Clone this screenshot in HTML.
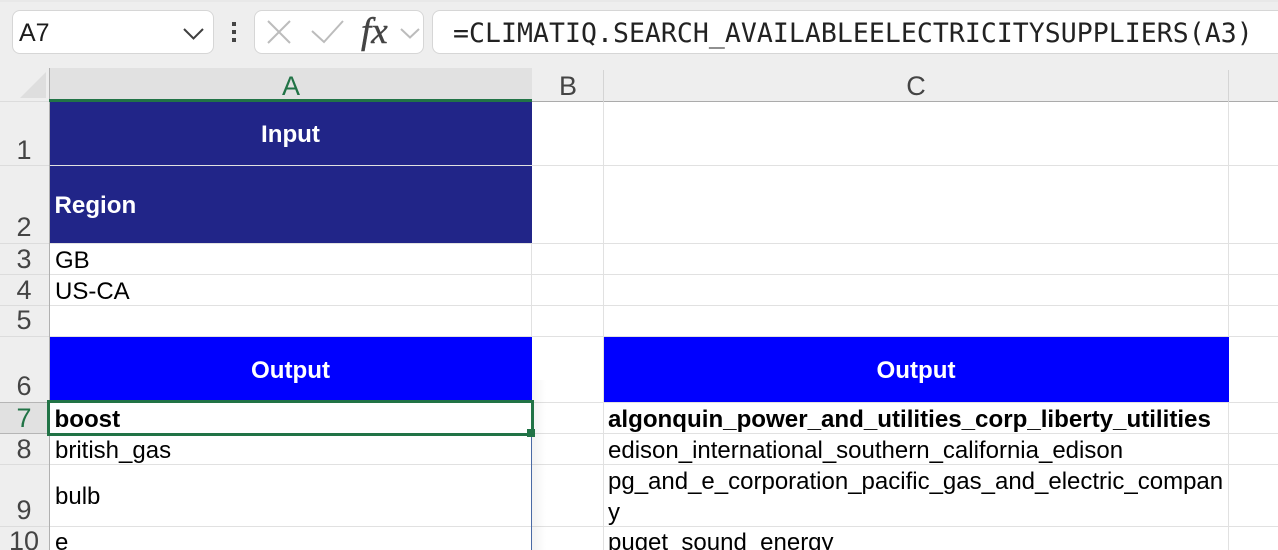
<!DOCTYPE html>
<html><head><meta charset="utf-8"><style>
html,body{margin:0;padding:0;background:#fff}
#p{position:relative;width:1278px;height:550px;overflow:hidden;background:#fff;font-family:"Liberation Sans",Arial,sans-serif}
#p div{position:absolute}
.h{background:#e1e1e1;height:1px}
.v{background:#e1e1e1;width:1px}
.t{font-size:24px;line-height:30px;color:#000;white-space:nowrap}
.b{font-weight:bold;font-size:24.120px}
.w{color:#fff;font-weight:bold;text-align:center;font-size:24.120px}
.rn{left:0;width:48px;text-align:center;font-size:27px;line-height:30px;color:#444}
.cn{font-size:27px;line-height:30px;color:#444;text-align:center;top:71px}
.box{background:#fff;border:1px solid #d6d6d6;border-radius:8px;box-sizing:border-box}
</style></head><body><div id="p">
<div style="left:0;top:0;width:1278px;height:102px;background:#eeeeee"></div>
<div style="left:0;top:0;width:1278px;height:2px;background:#e8e8e8"></div>
<div class="box" style="left:12px;top:10px;width:202px;height:44px"></div>
<div class="t" style="left:19px;top:18px;font-size:25px;color:#1c1c1c">A7</div>
<div class="box" style="left:254px;top:10px;width:170px;height:44px"></div>
<svg style="position:absolute;left:0;top:0" width="440" height="102">
<path d="M184 29l9.500 9.500 9.500-9.500" fill="none" stroke="#3f3f3f" stroke-width="2"/>
<rect x="232" y="22" width="4" height="4" fill="#444"/><rect x="232" y="30" width="4" height="4" fill="#444"/><rect x="232" y="38" width="4" height="4" fill="#444"/>
<path d="M268 21l22 22M290 21l-22 22" stroke="#bcbcbc" stroke-width="2" fill="none"/>
<path d="M312 31l12 11 19-21" stroke="#bcbcbc" stroke-width="2" fill="none"/>
<path d="M401 29l9 8.500 9-8.500" stroke="#bcbcbc" stroke-width="2" fill="none"/>
<path d="M20 98h26V72z" fill="#dedede"/>
</svg>
<div style="left:361px;top:12px;font-family:'Liberation Serif',serif;font-style:italic;font-size:37px;line-height:40px;color:#444;-webkit-text-stroke:.5px #444;letter-spacing:0">fx</div>
<div class="box" style="left:432px;top:10px;width:860px;height:44px"></div>
<div style="left:453px;top:18px;font-family:'DejaVu Sans Mono',monospace;font-size:26.500px;line-height:32px;color:#222;white-space:nowrap;letter-spacing:.04px">=CLIMATIQ.SEARCH_AVAILABLEELECTRICITYSUPPLIERS(A3)</div>

<div style="left:49px;top:68px;width:483px;height:32px;background:#e1e1e1"></div>
<div style="left:0;top:101px;width:49px;height:1px;background:#dcdcdc"></div>
<div style="left:49px;top:101px;width:1229px;height:1px;background:#ababab"></div>
<div class="v" style="left:603px;top:70px;height:32px;background:#d4d4d4"></div>
<div class="v" style="left:1228px;top:70px;height:32px;background:#d4d4d4"></div>
<div class="cn" style="left:50px;width:482px;color:#217346">A</div>
<div class="cn" style="left:532px;width:72px">B</div>
<div class="cn" style="left:604px;width:624px">C</div>

<div class="v" style="left:531px;top:102px;height:448px"></div>
<div class="v" style="left:603px;top:102px;height:448px"></div>
<div class="v" style="left:1228px;top:102px;height:448px"></div>
<div class="h" style="left:0;top:165px;width:1278px"></div>
<div class="h" style="left:0;top:243px;width:1278px"></div>
<div class="h" style="left:0;top:274px;width:1278px"></div>
<div class="h" style="left:0;top:305px;width:1278px"></div>
<div class="h" style="left:0;top:336px;width:1278px"></div>
<div class="h" style="left:0;top:402px;width:1278px"></div>
<div class="h" style="left:0;top:433px;width:1278px"></div>
<div class="h" style="left:0;top:464px;width:1278px"></div>
<div class="h" style="left:0;top:526px;width:1278px"></div>

<div style="left:0;top:102px;width:49px;height:448px;background:#eeeeee"></div>
<div class="h" style="left:0;top:165px;width:49px;background:#dcdcdc"></div>
<div class="h" style="left:0;top:243px;width:49px;background:#dcdcdc"></div>
<div class="h" style="left:0;top:274px;width:49px;background:#dcdcdc"></div>
<div class="h" style="left:0;top:305px;width:49px;background:#dcdcdc"></div>
<div class="h" style="left:0;top:336px;width:49px;background:#dcdcdc"></div>
<div class="h" style="left:0;top:464px;width:49px;background:#dcdcdc"></div>
<div class="h" style="left:0;top:526px;width:49px;background:#dcdcdc"></div>
<div style="left:0;top:402px;width:49px;height:32px;background:#e1e1e1;border-top:1px solid #b5b5b5;border-bottom:1px solid #b5b5b5;box-sizing:border-box"></div>
<div style="left:49px;top:68px;width:1px;height:482px;background:#b0b0b0"></div>

<div style="left:50px;top:102px;width:482px;height:63px;background:#212588"></div>
<div style="left:50px;top:166px;width:482px;height:77px;background:#212588"></div>
<div style="left:50px;top:337px;width:482px;height:64px;background:#0000ff"></div>
<div style="left:604px;top:337px;width:625px;height:65px;background:#0000ff"></div>
<div style="left:49px;top:99px;width:483px;height:3px;background:#217346"></div>

<div class="t w" style="left:50px;top:120px;width:481px">Input</div>
<div class="t w" style="left:54.500px;top:191px;text-align:left">Region</div>
<div class="t w" style="left:50px;top:356px;width:481px">Output</div>
<div class="t w" style="left:604px;top:356px;width:624px">Output</div>

<div class="t" style="left:55px;top:246px">GB</div>
<div class="t" style="left:55px;top:277px">US-CA</div>
<div class="t b" style="left:54.500px;top:405px">boost</div>
<div class="t" style="left:55px;top:436px">british_gas</div>
<div class="t" style="left:55px;top:482px">bulb</div>
<div class="t" style="left:55px;top:528px">e</div>
<div class="t b" style="left:608px;top:405px">algonquin_power_and_utilities_corp_liberty_utilities</div>
<div class="t" style="left:608px;top:436px">edison_international_southern_california_edison</div>
<div class="t" style="left:608px;top:467px">pg_and_e_corporation_pacific_gas_and_electric_compan</div>
<div class="t" style="left:608px;top:498px">y</div>
<div class="t" style="left:608px;top:528px">puget_sound_energy</div>

<div class="rn" style="top:135px">1</div>
<div class="rn" style="top:212px">2</div>
<div class="rn" style="top:244px">3</div>
<div class="rn" style="top:275px">4</div>
<div class="rn" style="top:305px">5</div>
<div class="rn" style="top:371px">6</div>
<div class="rn" style="top:403px;color:#217346">7</div>
<div class="rn" style="top:434px">8</div>
<div class="rn" style="top:495px">9</div>
<div class="rn" style="top:526px">10</div>

<div style="left:532px;top:380px;width:14px;height:170px;background:linear-gradient(90deg,rgba(0,0,0,.05),rgba(0,0,0,0))"></div>
<div style="left:531px;top:436px;width:1px;height:114px;background:#4a6aa5"></div>
<div style="left:47px;top:400px;width:487px;height:36px;box-sizing:border-box;border:3px solid #217346"></div>
<div style="left:527px;top:429px;width:8px;height:8px;background:#217346"></div>
</div></body></html>
